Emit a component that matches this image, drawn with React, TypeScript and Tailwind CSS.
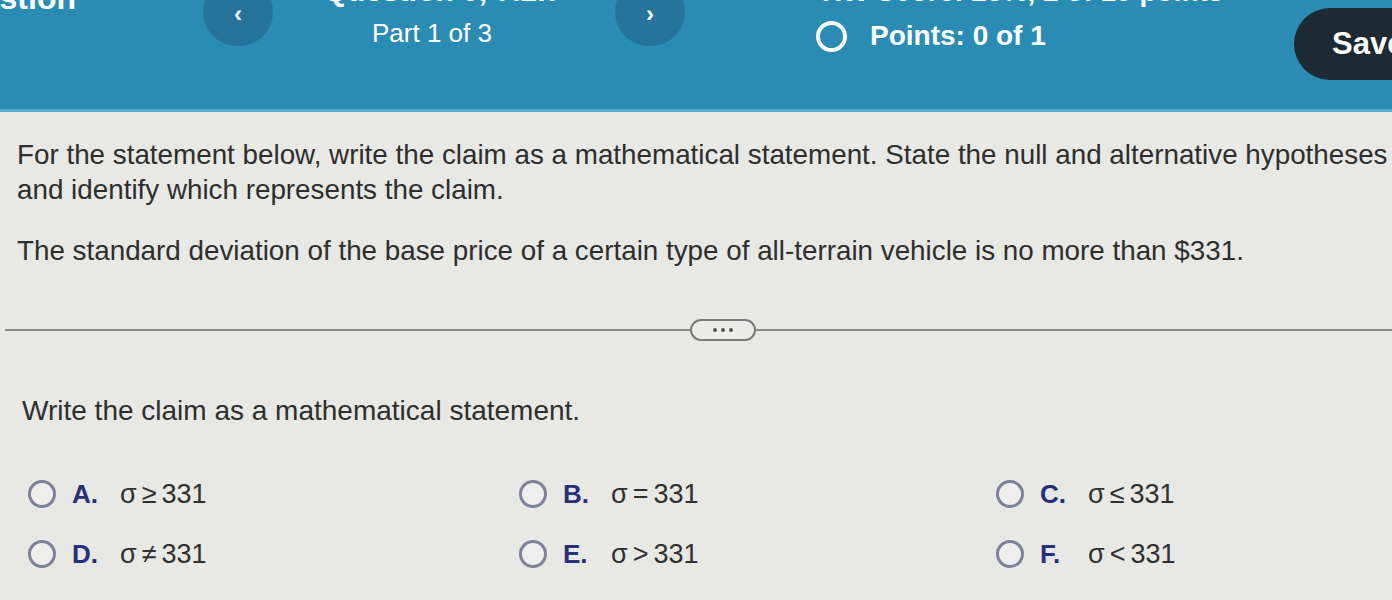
import React from 'react';

const options = [
  { key: 'A', op: '≥' },
  { key: 'B', op: '=' },
  { key: 'C', op: '≤' },
  { key: 'D', op: '≠' },
  { key: 'E', op: '>' },
  { key: 'F', op: '<' },
];

const NavButton = ({ label, className }: { label: string; className?: string }) => (
  <div
    className={
      'w-[70px] h-[68px] rounded-full bg-[#26739c] flex items-start justify-center pt-[18px] text-white text-[24px] font-bold shrink-0 ' +
      (className ?? '')
    }
  >
    {label}
  </div>
);

const Option = ({ letter, op }: { letter: string; op: string }) => (
  <div className="flex items-center h-[30px]">
    <span className="w-[28px] h-[28px] rounded-full border-[3px] border-[#7d8199] bg-[#eeeeec] shrink-0" />
    <span className="ml-[16px] w-[48px] text-[26px] font-bold text-[#27307a]">{letter}.</span>
    <span className="text-[27px] text-[#2f2f2f] flex items-center gap-[5px]">
      <span>σ</span>
      <span>{op}</span>
      <span>331</span>
    </span>
  </div>
);

export default function App() {
  return (
    <div className="w-[1392px] h-[600px] overflow-hidden bg-[#e8e8e5] font-['Liberation_Sans',Arial,sans-serif]">
      {/* header */}
      <div className="h-[112px] bg-[#2b8cb3] border-b-[3px] border-[#5aa9c8] overflow-hidden flex items-start text-white">
        <div className="w-[76px] shrink-0 flex justify-end whitespace-nowrap mt-[-26px] text-[32px] font-bold">
          Question
        </div>
        <NavButton label="‹" className="ml-[127px] mt-[-22px]" />
        <div className="w-[340px] shrink-0 flex flex-col items-center mt-[-27px]">
          <div className="text-[30px] font-bold whitespace-nowrap leading-[36px]">Question 5, 7.2.7</div>
          <div className="text-[26px] leading-[32px] mt-[8px] mr-[22px]">Part 1 of 3</div>
        </div>
        <NavButton label="›" className="mt-[-22px] ml-[2px]" />
        <div className="ml-[131px] w-[478px] shrink-0 flex flex-col mt-[-25px]">
          <div className="text-[28px] font-bold whitespace-nowrap leading-[34px] ml-[6px]">HW Score: 25%, 2 of 10 points</div>
          <div className="flex items-center mt-[6px]">
            <span className="w-[31px] h-[31px] rounded-full border-[4px] border-white shrink-0" />
            <span className="ml-[23px] text-[28px] font-bold">Points: 0 of 1</span>
          </div>
        </div>
        <div className="mt-[8px] h-[72px] w-[140px] shrink-0 rounded-l-full bg-[#1d2a33] flex items-center pl-[38px] text-[31px] font-bold">
          Save
        </div>
      </div>

      {/* question */}
      <div className="pl-[17px] pt-[25px] text-[27.8px] leading-[35px] text-[#2e2e2e]">
        <p className="whitespace-nowrap">
          For the statement below, write the claim as a mathematical statement. State the null and alternative hypotheses
        </p>
        <p>and identify which represents the claim.</p>
        <p className="mt-[26px] whitespace-nowrap">
          The standard deviation of the base price of a certain type of all-terrain vehicle is no more than $331.
        </p>
      </div>

      {/* separator */}
      <div className="mt-[51px] flex items-center pl-[5px]">
        <div className="w-[685px] h-[2px] bg-[#8a8a8a]" />
        <div className="w-[66px] h-[22px] rounded-full border-2 border-[#7a7a7a] bg-[#ececea] flex items-center justify-center gap-[4px]">
          <span className="w-[4px] h-[4px] rounded-full bg-[#555]" />
          <span className="w-[4px] h-[4px] rounded-full bg-[#555]" />
          <span className="w-[4px] h-[4px] rounded-full bg-[#555]" />
        </div>
        <div className="flex-1 h-[2px] bg-[#8a8a8a]" />
      </div>

      <p className="pl-[22px] mt-[52px] text-[28px] leading-[35px] text-[#2e2e2e]">
        Write the claim as a mathematical statement.
      </p>

      <div className="pl-[28px] mt-[51px] grid grid-cols-[491px_477px_1fr] gap-y-[30px]">
        {options.map((o) => (
          <Option key={o.key} letter={o.key} op={o.op} />
        ))}
      </div>
    </div>
  );
}
